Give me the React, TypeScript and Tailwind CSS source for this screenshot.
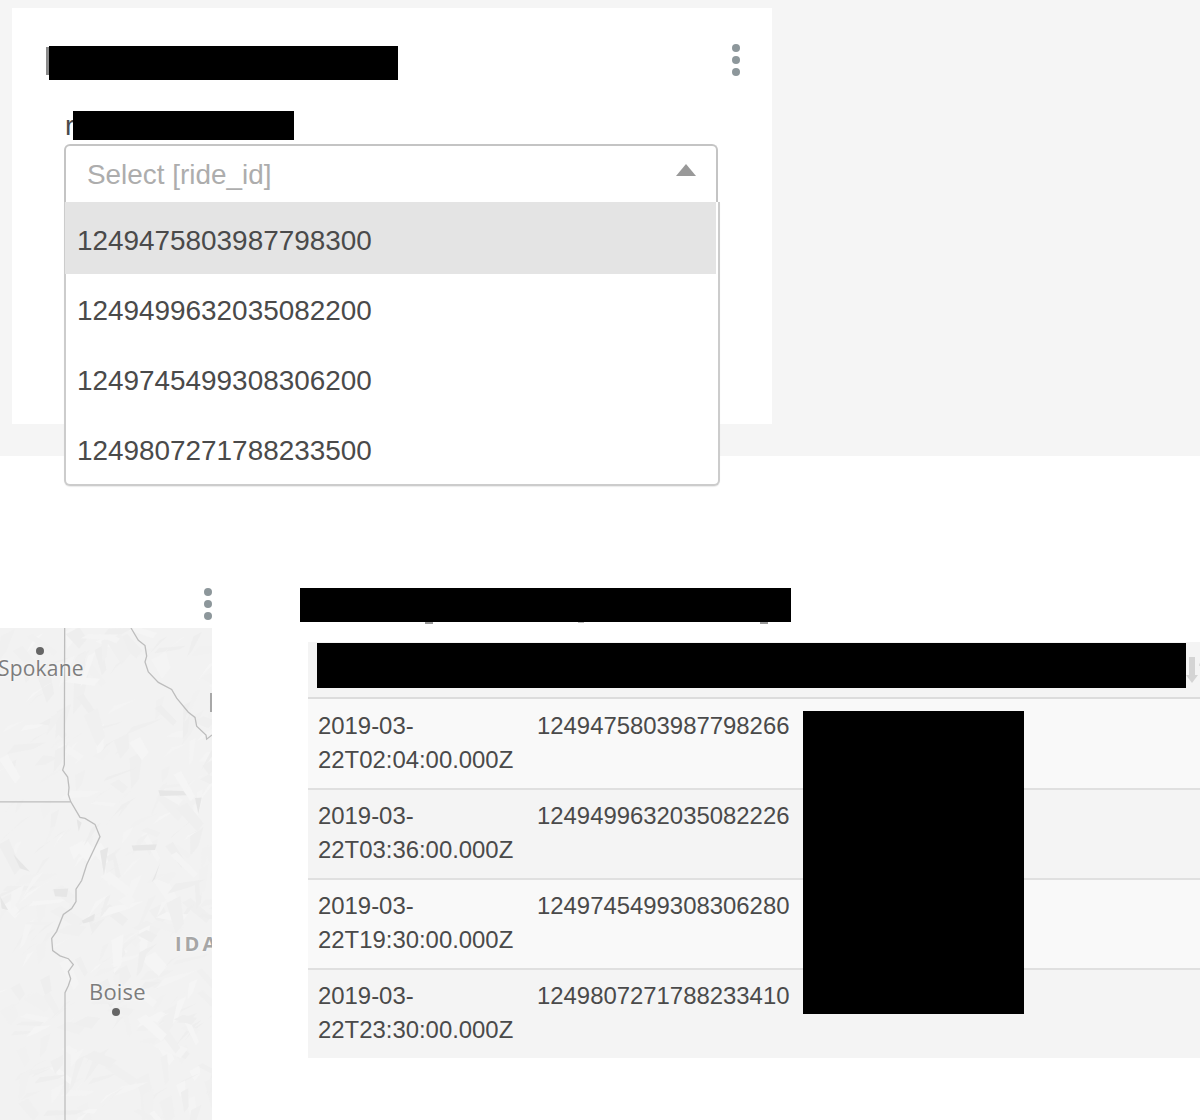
const terrain: { d: string; f: string }[] = (() => {
  let s = 12345;
  const r = () => {
    s = (s * 1664525 + 1013904223) % 4294967296;
    return s / 4294967296;
  };
  const out: { d: string; f: string }[] = [];
  const fills = ['#f0f0f0', '#efefef', '#f4f4f4', '#f1f1f1', '#eeeeee', '#f5f5f5'];
  for (let i = 0; i < 340; i++) {
    const x = r() * 660 - 10;
    const y = 165 + r() * 1400;
    const a = r() * Math.PI;
    const l = 30 + r() * 70;
    const w = 14 + r() * 30;
    const cx = Math.cos(a) * l;
    const cy = Math.sin(a) * l;
    out.push({
      d: `M${x} ${y}L${x + cx} ${y + cy}L${x + cx + w * 0.6} ${y + cy - w * 0.7}L${x + w} ${y - w * 0.5}Z`,
      f: fills[Math.floor(r() * fills.length)],
    });
  }
  return out;
})();

const dark = [
  'M475 628L550 630L560 642L480 644Z',
  'M395 785L470 782L465 798L400 800Z',
  'M160 910L205 908L200 932L165 930Z',
  'M245 1000L285 980L280 1000L250 1008Z',
  'M585 650L605 648L595 695Z',
  'M300 800L325 790L312 870Z',
  'M455 890L480 835L465 880Z',
  'M230 710L245 720L236 745Z',
  'M0 930L25 970L5 965Z',
  'M40 810L90 860L60 850Z',
];

function Kebab() {
  return (
    <div className="flex flex-col gap-1">
      <span className="h-2 w-2 rounded-full bg-[#8d979b]" />
      <span className="h-2 w-2 rounded-full bg-[#8d979b]" />
      <span className="h-2 w-2 rounded-full bg-[#8d979b]" />
    </div>
  );
}

function MapPanel() {
  return (
    <div className="relative mt-2 h-[492px] w-[212px] overflow-hidden bg-[#f2f2f2]">
      <svg className="absolute inset-0 h-full w-full" viewBox="0 165 636 1403" preserveAspectRatio="none">
        {terrain.map((t, i) => (
          <path key={i} d={t.d} fill={t.f} />
        ))}
        {dark.map((d) => (
          <path key={d} d={d} fill="#e6e6e6" />
        ))}
        <g fill="none" stroke="#bdbdbd" strokeWidth="1.3">
          <path
            vectorEffect="non-scaling-stroke"
            d="M194 165L193 555L188 570L203 590L207 620L205 640L212 660L240 705L255 708L285 725L300 760L280 800L260 840L245 885L228 910L228 945L215 965L190 982L170 1030L155 1050L158 1085L180 1100L205 1108L220 1125L205 1145L212 1165L205 1185L195 1205L195 1568"
          />
          <path vectorEffect="non-scaling-stroke" d="M0 661L212 661" />
          <path
            vectorEffect="non-scaling-stroke"
            d="M393 165L415 200L435 215L440 245L435 262L445 290L475 320L515 340L530 365L565 405L585 420L590 445L618 470L620 482L636 470"
          />
        </g>
      </svg>
      <span className="absolute left-[36px] top-[19px] h-2 w-2 rounded-full bg-[#666666]" />
      <span className="absolute left-[112px] top-[380px] h-2 w-2 rounded-full bg-[#666666]" />
      <span className="absolute left-[-2px] top-[26px] font-['Open_Sans',sans-serif] text-[21px] leading-[28px] tracking-[0.2px] text-[#7d7d7d] [text-shadow:0_0_3px_#ffffff]">
        Spokane
      </span>
      <span className="absolute left-[89px] top-[349px] font-['Open_Sans',sans-serif] text-[22px] leading-[28px] tracking-[0.2px] text-[#7d7d7d] [text-shadow:0_0_3px_#ffffff]">
        Boise
      </span>
      <span className="absolute left-[175px] top-[303px] font-['Open_Sans',sans-serif] text-[20px] font-bold leading-[26px] tracking-[3px] text-[#a6a6a6] [text-shadow:0_0_3px_#ffffff]">
        IDAHO
      </span>
      <span className="absolute left-[210px] top-[65px] h-[19px] w-[2px] bg-[#a8a8a8]" />
    </div>
  );
}

const rows = [
  ['2019-03-22T02:04:00.000Z', '1249475803987798266', 'h-[91px] pt-[10px] border-b-2 border-[#e0e0e0] bg-[#f9f9f9]'],
  ['2019-03-22T03:36:00.000Z', '1249499632035082226', 'h-[90px] pt-[9px] border-b-2 border-[#e0e0e0] bg-[#f4f4f4]'],
  ['2019-03-22T19:30:00.000Z', '1249745499308306280', 'h-[90px] pt-[9px] border-b-2 border-[#e0e0e0] bg-[#f9f9f9]'],
  ['2019-03-22T23:30:00.000Z', '1249807271788233410', 'h-[88px] pt-[9px] bg-[#f4f4f4]'],
];

const options = ['1249475803987798300', '1249499632035082200', '1249745499308306200', '1249807271788233500'];

export default function App() {
  return (
    <div className="h-[1120px] w-[1200px] overflow-hidden bg-white font-['Liberation_Sans',Arial,sans-serif] text-[#4a4a4a]">
      <section className="h-[456px] bg-[#f5f5f5] pl-3 pt-2">
        <div className="h-[416px] w-[760px] bg-white pt-[36px]">
          <div className="flex items-start justify-between pl-[34px] pr-[32px]">
            <div className="mt-[2px] flex items-start">
              <span className="mt-[1px] h-[28px] w-[3px] bg-[#8a8a8a]" />
              <div className="h-[34px] w-[349px] bg-black" />
            </div>
            <Kebab />
          </div>
          <div className="ml-[53px] mt-[31px] flex h-[33px] w-[653px] items-start">
            <span className="w-[8px] overflow-hidden text-[28px] leading-[30px] text-[#4a4a4a]">r</span>
            <div className="h-[29px] w-[221px] bg-black" />
          </div>
          <div className="relative ml-[52px] w-[654px]">
            <div className="flex h-[58px] items-start justify-between rounded-t-[6px] border-2 border-b-0 border-[#c4c4c4] bg-white pl-[21px] pr-[20px]">
              <span className="pt-[13px] text-[27.9px] leading-[32px] text-[#adadad]">Select [ride_id]</span>
              <span className="mt-[18px] h-0 w-0 border-x-[10px] border-b-[12px] border-x-transparent border-b-[#999999]" />
            </div>
            <div className="absolute left-0 top-[58px] z-10 h-[284px] w-[656px] rounded-b-[6px] border-2 border-t-0 border-[#cccccc] bg-white shadow-[0_1px_1px_rgba(0,0,0,0.08)]">
              {options.map((o, i) => (
                <div
                  key={o}
                  className={`pl-[11px] text-[27.9px] leading-[32px] text-[#4a4a4a] ${i === 0 ? '-ml-[1px] mr-[2px] h-[72px] bg-[#e4e4e4] pl-[12px] pt-[23px]' : 'h-[70px] pt-[21px]'}`}
                >
                  {o}
                </div>
              ))}
            </div>
          </div>
        </div>
      </section>
      <section className="flex">
        <div className="flex w-[212px] flex-col items-end pt-[132px]">
          <Kebab />
          <MapPanel />
        </div>
        <div className="ml-[88px] flex-1 pt-[132px]">
          <div className="relative h-[34px] w-[491px] bg-black">
            <span className="absolute left-[125px] top-[34px] h-[2px] w-[8px] bg-[#999999]" />
            <span className="absolute left-[278px] top-[34px] h-[1px] w-[6px] bg-[#bbbbbb]" />
            <span className="absolute left-[460px] top-[34px] h-[2px] w-[8px] bg-[#999999]" />
          </div>
          <div className="relative ml-2 mt-[20px]">
            <div className="flex h-[55px] items-start bg-[#f4f4f4] pl-[9px] pt-[1px]">
              <div className="h-[45px] w-[869px] shrink-0 bg-black" />
              <svg className="mt-[14px] shrink-0" width="15" height="28" viewBox="0 0 15 28">
                <path d="M3 0H9V18H12L6 26L0 18H3Z" fill="#d4d4d4" />
                <path d="M13 7L15 5V9H13Z" fill="#dddddd" />
              </svg>
            </div>
            <div className="h-[2px] bg-[#dcdcdc]" />
            {rows.map(([a, b, cls]) => (
              <div key={b} className={`flex pl-[10px] text-[23.9px] leading-[34px] text-[#4a4a4a] ${cls}`}>
                <div className="w-[219px] shrink-0 pr-[10px]">{a}</div>
                <div>{b}</div>
              </div>
            ))}
            <div className="absolute left-[495px] top-[69px] h-[303px] w-[221px] bg-black" />
          </div>
        </div>
      </section>
    </div>
  );
}
